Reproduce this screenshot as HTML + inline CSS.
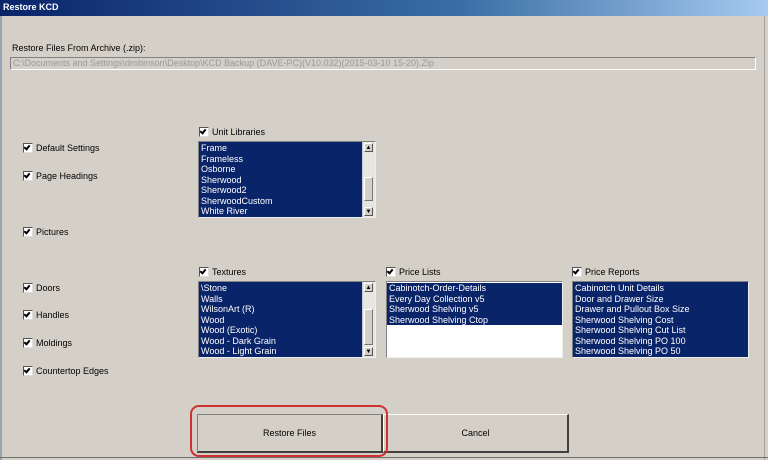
<!DOCTYPE html>
<html><head><style>
body{margin:0;width:768px;height:460px;background:#d4d0c8;position:relative;overflow:hidden;font-family:"Liberation Sans",sans-serif;font-size:9px;color:#000}
.a{position:absolute}
.title{left:0;top:0;width:768px;height:16px;background:linear-gradient(to right,#0a246a,#3a6ea5 60%,#a6caf0);}
.title span{position:absolute;left:3px;top:2px;color:#fff;font-weight:bold;font-size:9px}
.cb{position:absolute;width:8px;height:8px;background:#fff;border:1px solid #555;border-right-color:#ddd;border-bottom-color:#ddd}
.cb:after{content:"";position:absolute;left:1px;top:0px;width:2px;height:4px;border:solid #000;border-width:0 2px 2px 0;transform:rotate(40deg)}
.lbl{position:absolute;font-size:9px}
.list{position:absolute;background:#fff;border:1px solid #808080;border-right-color:#eee;border-bottom-color:#eee;overflow:hidden}
.list div{background:#0a246a;color:#fff;height:10.5px;line-height:10.5px;padding-left:2px;white-space:nowrap}
.sb{position:absolute;right:0;top:0;width:12px;bottom:0;background:#e8e6e0;border-left:1px solid #ccc}
.sb i{position:absolute;left:1px;width:9px;height:9px;background:#d4d0c8;border:1px solid #fff;border-right-color:#555;border-bottom-color:#555;box-sizing:border-box;font-style:normal;font-size:6px;text-align:center;line-height:8px}
.btn{position:absolute;background:#d4d0c8;border:1px solid #fff;border-right:2px solid #404040;border-bottom:2px solid #404040;box-sizing:border-box;text-align:center;font-size:9px}
</style></head><body>
<div class="a title"><span>Restore KCD</span></div>
<div class="a" style="left:0;top:16px;width:2px;height:444px;background:#9aa4b4"></div>
<div class="a" style="left:764px;top:16px;width:1px;height:444px;background:#a0a0a0"></div>
<div class="a" style="left:0;top:457px;width:768px;height:1px;background:#707070"></div>
<div class="lbl" style="left:12px;top:43px">Restore Files From Archive (.zip):</div>
<div class="a" style="left:10px;top:57px;width:746px;height:13px;border-top:1px solid #808080;border-left:1px solid #808080;border-right:1px solid #fff;border-bottom:1px solid #fff;box-sizing:border-box;color:#999;font-size:9px;line-height:11px;padding-left:2px;white-space:nowrap">C:\Documents and Settings\drobinson\Desktop\KCD Backup (DAVE-PC)(V10.032)(2015-03-10 15-20).Zip</div>

<div class="cb" style="left:23px;top:143px"></div><div class="lbl" style="left:36px;top:143px">Default Settings</div>
<div class="cb" style="left:23px;top:171px"></div><div class="lbl" style="left:36px;top:171px">Page Headings</div>
<div class="cb" style="left:23px;top:227px"></div><div class="lbl" style="left:36px;top:227px">Pictures</div>
<div class="cb" style="left:23px;top:283px"></div><div class="lbl" style="left:36px;top:283px">Doors</div>
<div class="cb" style="left:23px;top:310px"></div><div class="lbl" style="left:36px;top:310px">Handles</div>
<div class="cb" style="left:23px;top:338px"></div><div class="lbl" style="left:36px;top:338px">Moldings</div>
<div class="cb" style="left:23px;top:366px"></div><div class="lbl" style="left:36px;top:366px">Countertop Edges</div>

<div class="cb" style="left:199px;top:127px"></div><div class="lbl" style="left:212px;top:127px">Unit Libraries</div>
<div class="list" style="left:198px;top:141px;width:176px;height:75px;background:#0a246a"><div style="margin-top:1px">Frame</div><div>Frameless</div><div>Osborne</div><div>Sherwood</div><div>Sherwood2</div><div>SherwoodCustom</div><div>White River</div>
<span class="sb"><i style="top:1px">▲</i><i style="bottom:1px">▼</i><b style="position:absolute;left:1px;top:35px;width:9px;height:24px;background:#d4d0c8;border:1px solid #fff;border-right-color:#777;border-bottom-color:#777;box-sizing:border-box"></b></span></div>

<div class="cb" style="left:199px;top:267px"></div><div class="lbl" style="left:212px;top:267px">Textures</div>
<div class="list" style="left:198px;top:281px;width:176px;height:75px;background:#0a246a"><div style="margin-top:1px">\Stone</div><div>Walls</div><div>WilsonArt (R)</div><div>Wood</div><div>Wood (Exotic)</div><div>Wood - Dark Grain</div><div>Wood - Light Grain</div>
<span class="sb"><i style="top:1px">▲</i><i style="bottom:1px">▼</i><b style="position:absolute;left:1px;top:27px;width:9px;height:36px;background:#d4d0c8;border:1px solid #fff;border-right-color:#777;border-bottom-color:#777;box-sizing:border-box"></b></span></div>

<div class="cb" style="left:386px;top:267px"></div><div class="lbl" style="left:399px;top:267px">Price Lists</div>
<div class="list" style="left:386px;top:281px;width:175px;height:75px"><div style="margin-top:1px">Cabinotch-Order-Details</div><div>Every Day Collection v5</div><div>Sherwood Shelving v5</div><div>Sherwood Shelving Ctop</div></div>

<div class="cb" style="left:572px;top:267px"></div><div class="lbl" style="left:585px;top:267px">Price Reports</div>
<div class="list" style="left:572px;top:281px;width:175px;height:75px;background:#0a246a"><div style="margin-top:1px">Cabinotch Unit Details</div><div>Door and Drawer Size</div><div>Drawer and Pullout Box Size</div><div>Sherwood Shelving Cost</div><div>Sherwood Shelving Cut List</div><div>Sherwood Shelving PO 100</div><div>Sherwood Shelving PO 50</div></div>

<div class="btn" style="left:197px;top:414px;width:186px;height:39px;line-height:36px;border-top-color:#808080;border-left-color:#808080">Restore Files</div>
<div class="btn" style="left:383px;top:414px;width:186px;height:39px;line-height:36px">Cancel</div>
<div class="a" style="left:190px;top:405px;width:194px;height:48px;border:2px solid #d03030;border-radius:9px"></div>
</body></html>
